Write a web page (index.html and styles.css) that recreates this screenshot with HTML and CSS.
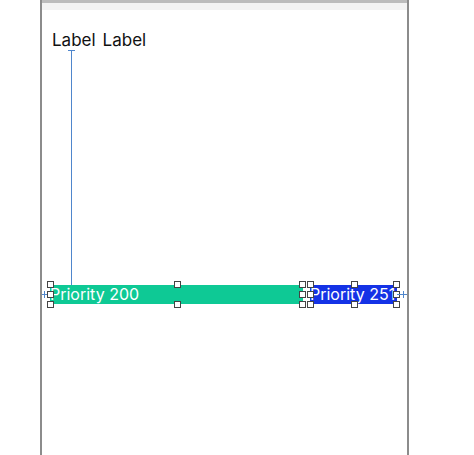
FILE: index.html
```html
<!DOCTYPE html>
<html lang="en">
<head>
  <meta charset="UTF-8" />
  <title>Main.storyboard</title>
  <link rel="stylesheet" href="styles.css">
</head>
<body>

  <div class="scene">
    <div class="status-bar"></div>

    <div class="labels">
      <span class="label">Label</span>
      <span class="label">Label</span>
    </div>

    <!-- vertical spacing constraint from label to bar -->
    <div class="constraint-v"></div>

    <div class="bar-row">
      <div class="pin pin-left"></div>
      <div class="view green">
        <span>Priority 200</span>
        <i class="h tl"></i><i class="h tm"></i><i class="h tr"></i>
        <i class="h ml"></i><i class="h mr"></i>
        <i class="h bl"></i><i class="h bm"></i><i class="h br"></i>
      </div>
      <div class="view blue">
        <span>Priority 251</span>
        <i class="h tl"></i><i class="h tm"></i><i class="h tr"></i>
        <i class="h ml"></i><i class="h mr"></i>
        <i class="h bl"></i><i class="h bm"></i><i class="h br"></i>
      </div>
      <div class="pin pin-right"></div>
    </div>
  </div>

</body>
</html>
```

FILE: styles.css
```css
* { box-sizing: border-box; margin: 0; padding: 0; }
body {
  font-family: Inter, "Liberation Sans", Arial, sans-serif;
  background: #fff;
  width: 474px;
  height: 455px;
  overflow: hidden;
}

/* Scene frame */
.scene {
  position: relative;
  margin-left: 40px;
  width: 369px;
  height: 455px;
  border-left: 2px solid #8c8c8c;
  border-right: 2px solid #8c8c8c;
}
.status-bar {
  height: 10px;
  border-top: 3px solid #bcbcbc;
  background: #f3f3f3;
}

/* Labels */
.labels {
  display: flex;
  gap: 7px;
  padding: 20px 0 0 10px;
  font-size: 17px;
  line-height: 20px;
  color: #111;
}

.constraint-v {
  position: absolute;
  left: 29px;
  top: 50px;
  width: 1px;
  height: 235px;
  background: #4f86cc;
}
.constraint-v::before {
  content: "";
  position: absolute;
  left: -3px;
  top: 0;
  width: 7px;
  height: 1px;
  background: #4f86cc;
}

/* Bars */
.bar-row {
  display: flex;
  align-items: center;
  margin-top: 235px;
  height: 19px;
}
.view {
  position: relative;
  height: 19px;
  color: #fff;
  font-size: 16px;
  line-height: 19px;
  white-space: nowrap;
}
.green {
  width: 253px;
  background: #0ec995;
}
.blue {
  width: 87px;
  margin-left: 7px;
  background: #1432e6;
}

.pin {
  position: relative;
  height: 1px;
  background: #4f86cc;
}
.pin::before {
  content: "";
  position: absolute;
  top: -3px;
  width: 1px;
  height: 7px;
  background: #4f86cc;
}
.pin-left { width: 8px; }
.pin-left::before { left: 2px; }
.pin-right { width: 10px; }
.pin-right::before { right: 3px; }

/* Resize handles */
.h {
  position: absolute;
  width: 7px;
  height: 7px;
  background: #fff;
  border: 1px solid #444;
}
.tl, .tm, .tr { top: -4px; }
.ml, .mr { top: 6px; }
.bl, .bm, .br { bottom: -4px; }
.tl, .ml, .bl { left: -3px; }
.tm, .bm { left: calc(50% - 3px); }
.tr, .mr, .br { right: -3px; }
```
